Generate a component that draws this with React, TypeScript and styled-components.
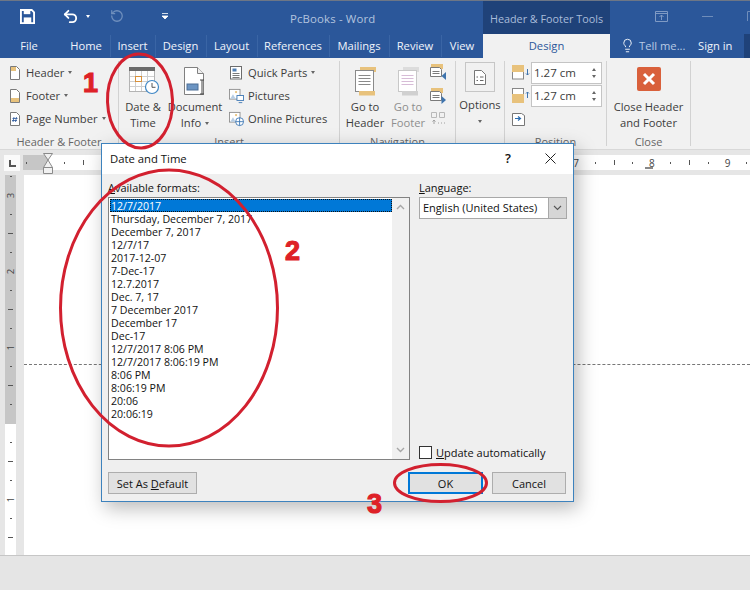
import React from 'react'
import styled, { createGlobalStyle } from 'styled-components'
import { Lightbulb, RotateCcw, Undo2 } from 'lucide-react'

const GlobalStyle = createGlobalStyle`
  html, body { margin: 0; padding: 0; background: #fff; }
  body { font-family: "Open Sans", "Noto Sans", "Liberation Sans", sans-serif; font-size: 11px; color: #222; }
`

const Window = styled.div`
  position: relative;
  width: 750px;
  height: 590px;
  overflow: hidden;
  background: #e5e5e5;
  display: flex;
  flex-direction: column;
`
const TitleBar = styled.div`
  height: 33px;
  margin-top: 1px;
  flex: none;
  background: #2b579a;
  display: flex;
  align-items: center;
  color: #fff;
`
const TopLine = styled.div`
  position: absolute;
  top: 0;
  left: 0;
  right: 0;
  height: 1px;
  background: #6d7686;
`
const QuickBar = styled.div`
  display: flex;
  align-items: center;
  width: 290px;
  flex: none;
  padding-left: 20px;
  box-sizing: border-box;
  height: 100%;
  padding-bottom: 3px;
`
const QuickSlot = styled.div<{ $w: number }>`
  width: ${p => p.$w}px;
  flex: none;
  display: flex;
  align-items: center;
`
const Caret = styled.span<{ $color?: string }>`
  display: inline-block;
  width: 0;
  height: 0;
  border-left: 2.5px solid transparent;
  border-right: 2.5px solid transparent;
  border-top: 3px solid ${p => p.$color || '#666'};
`
const DocTitle = styled.div`
  width: 193px;
  flex: none;
  font-size: 11.4px;
  letter-spacing: 0.15px;
  color: #b3c4de;
  padding-top: 2px;
  box-sizing: border-box;
`
const ContextLabel = styled.div`
  width: 127px;
  flex: none;
  height: 100%;
  background: #1f4279;
  color: #a9bcd9;
  font-size: 10.8px;
  display: flex;
  align-items: center;
  justify-content: center;
  padding-top: 2px;
  box-sizing: border-box;
  white-space: nowrap;
`
const WinButtons = styled.div`
  display: flex;
  align-items: center;
  padding-left: 45px;
  gap: 34px;
  padding-bottom: 3px;
  height: 100%;
  box-sizing: border-box;
`
const Tabs = styled.div`
  height: 24px;
  flex: none;
  background: #2b579a;
  display: flex;
  align-items: center;
`
const Tab = styled.div<{ $w: number; $sep?: boolean; $pr?: number }>`
  width: ${p => p.$w}px;
  flex: none;
  height: 22px;
  box-sizing: border-box;
  padding: 0 ${p => p.$pr || 0}px 2px 0;
  display: flex;
  align-items: center;
  justify-content: center;
  color: #f0f4fa;
  font-size: 11.2px;
  white-space: nowrap;
  box-shadow: ${p => (p.$sep ? '1px 0 0 #3a65a5' : 'none')};
`
const ActiveTab = styled.div`
  width: 127px;
  flex: none;
  align-self: stretch;
  background: #f1f1f1;
  color: #2b579a;
  font-size: 11.2px;
  padding-bottom: 1px;
  box-sizing: border-box;
  display: flex;
  align-items: center;
  justify-content: center;
`
const TellMe = styled.div`
  display: flex;
  align-items: center;
  gap: 4px;
  color: #b9cbe4;
  font-size: 11.2px;
  width: 78px;
  flex: none;
  padding: 0 0 2px 10px;
`
const SignIn = styled.div`
  color: #f0f4fa;
  font-size: 11.2px;
  width: 46px;
  flex: none;
  padding-bottom: 2px;
`
const ShareStub = styled.div`
  flex: 1;
  align-self: stretch;
  margin: 0;
  background: #1f4279;
`
const Ribbon = styled.div`
  height: 92px;
  flex: none;
  background: #f1f1f1;
  border-bottom: 1px solid #d8d8d8;
  box-sizing: border-box;
  display: flex;
`
const Group = styled.div<{ $w: number; $bare?: boolean }>`
  width: ${p => p.$w}px;
  flex: none;
  box-sizing: border-box;
  margin: 3px 0 3px;
  border-right: ${p => (p.$bare ? 'none' : '1px solid #d2d2d2')};
  display: flex;
  flex-direction: column;
`
const GroupBody = styled.div<{ $pad?: number }>`
  flex: 1;
  display: flex;
  padding-left: ${p => p.$pad || 0}px;
  min-height: 0;
`
const GroupLabel = styled.div`
  height: 17px;
  flex: none;
  margin-bottom: -4px;
  text-align: center;
  color: #666;
  font-size: 11px;
  line-height: 17px;
  white-space: nowrap;
`
const SmallList = styled.div<{ $w: number; $pad?: number }>`
  width: ${p => p.$w}px;
  flex: none;
  box-sizing: border-box;
  padding-left: ${p => p.$pad || 0}px;
  display: flex;
  flex-direction: column;
`
const SmallItem = styled.div`
  height: 23px;
  display: flex;
  align-items: center;
  gap: 4px;
  font-size: 11.2px;
  color: #3c3c3c;
  white-space: nowrap;
`
const IconSlot = styled.div<{ $w: number }>`
  width: ${p => p.$w}px;
  flex: none;
  display: flex;
  justify-content: center;
`
const BigButton = styled.div<{ $w: number; $dim?: boolean }>`
  width: ${p => p.$w}px;
  flex: none;
  display: flex;
  flex-direction: column;
  align-items: center;
  padding-top: 6px;
  color: ${p => (p.$dim ? '#8e8e8e' : '#3c3c3c')};
  font-size: 11.2px;
  line-height: 16px;
  white-space: nowrap;
`
const BigIcon = styled.div<{ $shift?: number }>`
  height: 30px;
  margin-bottom: 2px;
  padding-left: ${p => p.$shift || 0}px;
  display: flex;
  align-items: flex-start;
`
const TextLine = styled.div`
  display: flex;
  align-items: center;
  gap: 4px;
  min-height: 16px;
`
const OptionBox = styled.div`
  width: 30px;
  height: 30px;
  box-sizing: border-box;
  margin: -5px 0 5px;
  border: 1px solid #c6c6c6;
  display: flex;
  align-items: center;
  justify-content: center;
`
const NavIcons = styled.div`
  display: flex;
  flex-direction: column;
  gap: 7px;
  padding-top: 3px;
`
const PositionGrid = styled.div`
  display: grid;
  grid-template-columns: 19px 71px;
  grid-auto-rows: 21px;
  row-gap: 2px;
  margin-left: 7px;
  padding-top: 1px;
  align-items: center;
`
const Spinner = styled.div`
  height: 22px;
  background: #fff;
  border: 1px solid #c4c4c4;
  box-sizing: border-box;
  display: flex;
  align-items: center;
  justify-content: space-between;
  padding: 0 5px 0 2px;
  font-size: 11.5px;
  color: #3c3c3c;
`
const SpinArrows = styled.div`
  display: flex;
  flex-direction: column;
  gap: 4px;
`
const UpArrow = styled.span`
  width: 0;
  height: 0;
  border-left: 2.5px solid transparent;
  border-right: 2.5px solid transparent;
  border-bottom: 3px solid #666;
`
const DownArrow = styled(UpArrow)`
  border-bottom: none;
  border-top: 3px solid #666;
`

const RulerBand = styled.div`
  height: 25px;
  flex: none;
  background: #e6e6e6;
  display: flex;
  align-items: flex-start;
  padding-top: 5px;
  box-sizing: border-box;
`
const TabSelector = styled.div`
  width: 16px;
  height: 16px;
  margin-left: 4px;
  background: #fafafa;
  flex: none;
  display: flex;
  align-items: center;
  justify-content: center;
`
const HRuler = styled.div`
  position: relative;
  margin-left: 3px;
  flex: 1;
  height: 15px;
  background: #fff;
  overflow: visible;
  display: flex;
`
const HRulerMargin = styled.div`
  position: absolute;
  top: 0;
  left: 0;
  width: 25px;
  height: 100%;
  background: #c6c6c6;
`
const HTickRow = styled.div`
  position: relative;
  display: flex;
  margin-left: -5.5px;
`
const HTick = styled.div`
  width: 18.95px;
  flex: none;
  height: 15px;
  display: flex;
  align-items: center;
  justify-content: center;
  font-size: 10px;
  color: #444;
`
const Dot = styled.span`
  width: 1px;
  height: 2px;
  background: #555;
`
const TickLine = styled.span`
  width: 1px;
  height: 5px;
  background: #555;
`
const IndentMark = styled.svg`
  position: absolute;
  top: -2px;
  left: 20px;
`
const RightMark = styled.div`
  position: absolute;
  top: 11px;
  left: 622px;
  width: 8px;
  height: 3px;
  border-bottom: 2px solid #888;
  box-sizing: border-box;
`
const Workspace = styled.div`
  flex: 1;
  display: flex;
  min-height: 0;
`
const SideBand = styled.div`
  width: 24px;
  flex: none;
  background: #e6e6e6;
  padding-left: 5px;
  box-sizing: border-box;
  overflow: hidden;
`
const VRuler = styled.div`
  width: 11px;
  margin-top: -8px;
  display: flex;
  flex-direction: column;
`
const VTick = styled.div<{ $mark: number }>`
  height: 19px;
  flex: none;
  background: ${p =>
    p.$mark > 0 ? '#c6c6c6' : p.$mark === 0 ? 'linear-gradient(#c6c6c6 50%, #fff 50%)' : '#fff'};
  display: flex;
  align-items: center;
  justify-content: center;
  font-size: 9.5px;
  color: #444;
`
const VNum = styled.span`
  transform: rotate(-90deg);
`
const VDot = styled.span`
  width: 2px;
  height: 1px;
  background: #555;
`
const VLine = styled.span`
  width: 5px;
  height: 1px;
  background: #555;
`
const Page = styled.div`
  flex: 1;
  background: #fff;
  padding-top: 189px;
  box-sizing: border-box;
`
const HeaderRule = styled.div`
  border-top: 1px dashed #777;
`
const StatusBand = styled.div`
  height: 35px;
  flex: none;
  background: #e5e5e5;
  border-top: 1px solid #c6c6c6;
  box-sizing: border-box;
`

const Dialog = styled.div`
  position: absolute;
  left: 101px;
  top: 143px;
  width: 473px;
  height: 359px;
  box-sizing: border-box;
  background: #efefef;
  border: 1px solid #3d82bd;
  box-shadow: 4px 6px 18px rgba(0, 0, 0, 0.28);
  display: flex;
  flex-direction: column;
`
const DialogTitle = styled.div`
  height: 30px;
  flex: none;
  box-sizing: border-box;
  background: #fff;
  display: flex;
  align-items: center;
  padding: 0 17px 2px 8px;
  font-size: 11.3px;
  color: #111;
`
const DialogHeading = styled.div`
  flex: 1;
`
const HelpMark = styled.div`
  font-size: 13px;
  font-weight: 600;
  margin-right: 34px;
`
const DialogBody = styled.div`
  flex: 1;
  display: grid;
  grid-template-columns: 302px 148px;
  column-gap: 9px;
  padding: 6px 6px 0;
  min-height: 0;
`
const Column = styled.div`
  display: flex;
  flex-direction: column;
`
const FieldLabel = styled.div`
  height: 17px;
  font-size: 11px;
  line-height: 15px;
  color: #111;
`
const ListBox = styled.div`
  flex: 1;
  display: flex;
  background: #fff;
  border: 1px solid #828282;
  min-height: 0;
`
const Options = styled.div`
  flex: 1;
  padding: 1px 0 0 1px;
  font-size: 10.6px;
  color: #111;
`
const Option = styled.div<{ $selected?: boolean }>`
  height: 13px;
  line-height: 15px;
  padding-left: 1px;
  white-space: nowrap;
  background: ${p => (p.$selected ? '#0078d7' : 'transparent')};
  color: ${p => (p.$selected ? '#fff' : '#111')};
  outline: ${p => (p.$selected ? '1px dotted #111' : 'none')};
  outline-offset: -1px;
`
const ScrollTrack = styled.div`
  width: 17px;
  flex: none;
  background: #f0f0f0;
  display: flex;
  flex-direction: column;
  justify-content: space-between;
  align-items: center;
  padding: 6px 0;
  box-sizing: border-box;
`
const SelectBox = styled.div`
  height: 22px;
  display: flex;
  background: #fff;
  border: 1px solid #a8a8a8;
  box-sizing: border-box;
  font-size: 11px;
  color: #111;
`
const SelectValue = styled.div`
  flex: 1;
  display: flex;
  align-items: center;
  padding: 0 0 1px 3px;
  white-space: nowrap;
`
const SelectButton = styled.div`
  width: 17px;
  flex: none;
  background: #d6d6d6;
  border-left: 1px solid #a8a8a8;
  display: flex;
  align-items: center;
  justify-content: center;
`
const Spacer = styled.div`
  flex: 1;
`
const CheckRow = styled.div`
  display: flex;
  align-items: center;
  gap: 4px;
  font-size: 11px;
  color: #111;
  height: 14px;
  margin-bottom: 1px;
  white-space: nowrap;
`
const CheckBox = styled.div`
  width: 13px;
  height: 13px;
  box-sizing: border-box;
  border: 1px solid #333;
  background: #fff;
`
const DialogFooter = styled.div`
  height: 41px;
  flex: none;
  display: flex;
  align-items: flex-start;
  gap: 9px;
  padding: 12px 7px 0 6px;
  box-sizing: border-box;
`
const DialogButton = styled.div<{ $w: number; $primary?: boolean }>`
  width: ${p => p.$w}px;
  height: 22px;
  flex: none;
  box-sizing: border-box;
  background: #e1e1e1;
  border: ${p => (p.$primary ? '2px solid #0078d7' : '1px solid #adadad')};
  display: flex;
  align-items: center;
  justify-content: center;
  font-size: 11px;
  color: #111;
  white-space: nowrap;
`
const Under = styled.span`
  text-decoration: underline;
`
const Annotations = styled.svg`
  position: absolute;
  left: 0;
  top: 0;
  pointer-events: none;
`
const Step = styled.div<{ $x: number; $y: number }>`
  position: absolute;
  left: ${p => p.$x}px;
  top: ${p => p.$y}px;
  font-family: "Liberation Sans", sans-serif;
  font-weight: 700;
  font-size: 27px;
  line-height: 27px;
  color: #de2127;
  -webkit-text-stroke: 1.1px #de2127;
`

const tan = '#e8c27c'
const line = '#7a7a7a'

function PageIcon({ tanAt }: { tanAt: 'top' | 'bottom' }) {
  return (
    <svg width="12" height="14" viewBox="0 0 12 14">
      <path d="M1.5.5h6l3 3v10h-9z" fill="#fff" stroke={line} />
      <rect x="2" y={tanAt === 'top' ? 1 : 9} width={tanAt === 'top' ? 5 : 8} height="4" fill={tan} />
    </svg>
  )
}
function PageNumberIcon() {
  return (
    <svg width="12" height="14" viewBox="0 0 12 14">
      <path d="M1.5.5h6l3 3v10h-9z" fill="#fff" stroke={line} />
      <path d="M5 5l-1 5M7.5 5l-1 5M3.5 6.5h5M3 8.5h5" stroke="#2b579a" strokeWidth=".8" fill="none" />
    </svg>
  )
}
function CalendarIcon() {
  return (
    <svg width="31" height="28" viewBox="0 0 31 28">
      <rect x=".5" y="3.5" width="25" height="21" fill="#fff" stroke="#b4b4b4" />
      <rect x="0" y="0" width="26" height="4" fill="#6b6b6b" />
      <path d="M6.5 4v20M12.5 4v20M18.5 4v20M1 9.5h24M1 14.5h24M1 19.5h24" stroke="#cfcfcf" fill="none" />
      <rect x="6.5" y="9.5" width="6" height="5" fill="#fff" stroke="#d9913a" />
      <circle cx="23" cy="20" r="6.5" fill="#fff" stroke="#3f87c5" strokeWidth="1.2" />
      <path d="M23 16v4.3h3.5" stroke="#555" fill="none" />
    </svg>
  )
}
function DocInfoIcon() {
  return (
    <svg width="22" height="29" viewBox="0 0 22 29">
      <path d="M.5.5h13l6 6v21H.5z" fill="#fff" stroke="#808080" />
      <path d="M13.5.5v6h6" fill="#eee" stroke="#808080" />
      <rect x="3" y="17" width="11" height="6" fill="#6c95c3" stroke="#4c6f96" />
      <path d="M16 13h4M18 13v14M16 27h4" stroke="#444" fill="none" />
    </svg>
  )
}
function QuickPartsIcon() {
  return (
    <svg width="13" height="14" viewBox="0 0 13 14">
      <rect x=".5" y=".5" width="11" height="12.5" fill="#fff" stroke="#6c6c6c" />
      <rect x="2.5" y="2.5" width="4" height="3" fill="#4f7fb4" />
      <path d="M2.5 7.5h7M2.5 9.5h7M2.5 11.5h7" stroke="#7a7a7a" fill="none" />
    </svg>
  )
}
function PictureIcon({ globe }: { globe?: boolean }) {
  return (
    <svg width="17" height="16" viewBox="0 0 17 16">
      <rect x=".5" y=".5" width="12" height="11" fill="#fff" stroke="#8c8c8c" />
      <circle cx="8" cy="3.5" r="1.3" fill={tan} />
      <path d="M1.5 11l3-5 3 5z" fill="#b7cde3" />
      {globe ? (
        <g fill="#fff" stroke="#3b76b4">
          <circle cx="12" cy="11" r="4.5" />
          <path d="M7.5 11h9M12 6.5v9" fill="none" />
        </g>
      ) : (
        <g>
          <rect x="9" y="7.5" width="7.5" height="5.5" fill="#fff" stroke="#3b76b4" />
          <path d="M11 15.5h4" stroke="#3b76b4" />
        </g>
      )}
    </svg>
  )
}
function GoToIcon({ dim }: { dim?: boolean }) {
  return (
    <svg width="23" height="29" viewBox="0 0 23 29">
      <rect x="6" y="0" width="16" height="5" fill={dim ? '#dcdcdc' : tan} />
      <rect x="1.5" y="3.5" width="18" height="21" fill="#fff" stroke={dim ? '#c8c8c8' : '#8a8a8a'} />
      <path d="M4.5 8.5h12M4.5 11.5h12M4.5 14.5h12M4.5 17.5h12" stroke={dim ? '#d7bcd7' : '#8a8a8a'} fill="none" />
      <rect x="5" y="24" width="16" height="4.5" fill={dim ? '#d0d0d0' : tan} />
    </svg>
  )
}
function NavSmallIcon({ forward }: { forward?: boolean }) {
  return (
    <svg width="16" height="17" viewBox="0 0 16 17">
      <rect x="1" y="0" width="12" height="5" fill={tan} />
      <path d="M.5 3.5h9l2 2v7h-11z" fill="#fff" stroke="#7a7a7a" />
      <path d="M2.5 7.5h7M2.5 9.5h7" stroke="#7a7a7a" fill="none" />
      <path d={forward ? 'M11.5 8l4.5 4-4.5 4z' : 'M16 8v8l-4.5-4z'} fill="#3f74ad" />
    </svg>
  )
}
function LinkIcon() {
  return (
    <svg width="16" height="13" viewBox="0 0 16 13">
      <path d="M1.5.5h5v5h-5zM9.5.5h5v5h-5z" fill="none" stroke="#b8b8b8" />
      <path d="M4 12V8M2.5 9.5L4 8l1.5 1.5M8 11h1M11 11h1M14 11h1" stroke="#a0a0a0" fill="none" />
    </svg>
  )
}
function OptionsIcon() {
  return (
    <svg width="12" height="15" viewBox="0 0 12 15">
      <path d="M.5.5h7l4 4v10H.5z" fill="#fff" stroke="#777" />
      <path d="M2.5 7h1.5M2.5 10.5h1.5M6 7h3.5M6 10.5h3.5" stroke="#666" strokeWidth="1.2" fill="none" />
    </svg>
  )
}
function MarginIcon({ tanAt }: { tanAt: 'top' | 'bottom' }) {
  return (
    <svg width="18" height="15" viewBox="0 0 18 15">
      <rect x=".5" y=".5" width="11" height="13.5" fill="#fff" stroke="#888" />
      <rect x="0" y={tanAt === 'top' ? 0 : 6} width="12" height={tanAt === 'top' ? 7 : 9} fill={tan} />
      <path d={tanAt === 'top' ? 'M15.5 4v6M14 8.5l1.5 1.5L17 8.5' : 'M15.5 4v6M14 5.5L15.5 4 17 5.5'} stroke="#3f74ad" fill="none" />
    </svg>
  )
}
function InsertTabIcon() {
  return (
    <svg width="14" height="15" viewBox="0 0 14 15">
      <path d="M.5 2.5h9l3 2v10H.5z" fill="#fff" stroke="#777" />
      <path d="M3 7.5h5M6 5.5l2.5 2L6 9.5" stroke="#2b6cb0" strokeWidth="1.2" fill="none" />
    </svg>
  )
}
function CloseIcon() {
  return (
    <svg width="24" height="24" viewBox="0 0 24 24">
      <rect width="24" height="24" rx="2" fill="#d9603b" />
      <path d="M7 7l10 10M17 7L7 17" stroke="#fff" strokeWidth="3" />
    </svg>
  )
}

const formats = [
  '12/7/2017',
  'Thursday, December 7, 2017',
  'December 7, 2017',
  '12/7/17',
  '2017-12-07',
  '7-Dec-17',
  '12.7.2017',
  'Dec. 7, 17',
  '7 December 2017',
  'December 17',
  'Dec-17',
  '12/7/2017 8:06 PM',
  '12/7/2017 8:06:19 PM',
  '8:06 PM',
  '8:06:19 PM',
  '20:06',
  '20:06:19',
]

// -1 is the first mark left of the margin, every 4th mark carries a number
const hTicks = Array.from({ length: 39 }, (_, i) => i - 1)
const vTicks = Array.from({ length: 21 }, (_, i) => 13 - i)

function renderHTick(k: number) {
  if (k === 0) return null
  if (k % 4 === 0) return k >= 28 ? k / 4 : null // the lower numbers sit behind the dialog
  if (((k % 4) + 4) % 4 === 2) return <TickLine />
  return <Dot />
}
function renderVTick(k: number) {
  // k counts marks away from the top margin edge
  const a = Math.abs(k)
  if (a === 0) return null
  if (a % 4 === 0) return <VNum>{a / 4}</VNum>
  if (a % 4 === 2) return <VLine />
  return <VDot />
}

export default function App() {
  return (
    <Window>
      <GlobalStyle />
      <TopLine />
      <TitleBar>
        <QuickBar>
          <QuickSlot $w={42}>
            <svg width="15" height="15" viewBox="0 0 16 16">
              <path d="M1 1h11.5L15 3.5V15H1z" fill="none" stroke="#fff" strokeWidth="2" />
              <rect x="4" y="1" width="7" height="4.5" fill="#fff" />
              <rect x="4" y="9" width="8" height="6" fill="#fff" />
            </svg>
          </QuickSlot>
          <QuickSlot $w={24}>
            <Undo2 size={17} color="#fff" strokeWidth={2.6} />
          </QuickSlot>
          <QuickSlot $w={24}>
            <Caret $color="#fff" />
          </QuickSlot>
          <QuickSlot $w={52}>
            <RotateCcw size={14} color="#6f8fbd" strokeWidth={2.2} />
          </QuickSlot>
          <QuickSlot $w={10}>
            <svg width="6" height="6" viewBox="0 0 6 6">
              <path d="M0 .5h6M0 3h6l-3 3z" stroke="#fff" fill="#fff" strokeWidth=".8" />
            </svg>
          </QuickSlot>
        </QuickBar>
        <DocTitle>PcBooks - Word</DocTitle>
        <ContextLabel>Header &amp; Footer Tools</ContextLabel>
        <WinButtons>
          <svg width="13" height="11" viewBox="0 0 13 11">
            <path d="M.5.5h12v10H.5zM.5 2.5h12M6.5 9V4M4.5 6l2-2 2 2" stroke="#7f9ac4" fill="none" />
          </svg>
          <svg width="11" height="1" viewBox="0 0 11 1">
            <path d="M0 .5h11" stroke="#6f8dba" />
          </svg>
          <svg width="8" height="10" viewBox="0 0 8 10">
            <path d="M.5.5h10v10H.5z" stroke="#6f8dba" fill="none" />
          </svg>
        </WinButtons>
      </TitleBar>

      <Tabs>
        <Tab $w={62} $pr={4}>File</Tab>
        <Tab $w={48} $sep>Home</Tab>
        <Tab $w={45} $sep>Insert</Tab>
        <Tab $w={51} $sep>Design</Tab>
        <Tab $w={51} $sep>Layout</Tab>
        <Tab $w={72} $sep>References</Tab>
        <Tab $w={60} $sep>Mailings</Tab>
        <Tab $w={52} $sep>Review</Tab>
        <Tab $w={42}>View</Tab>
        <ActiveTab>Design</ActiveTab>
        <TellMe>
          <Lightbulb size={15} color="#e8eef6" strokeWidth={1.6} />
          Tell me...
        </TellMe>
        <SignIn>Sign in</SignIn>
        <ShareStub />
      </Tabs>

      <Ribbon>
        <Group $w={119}>
          <GroupBody $pad={8}>
            <SmallList $w={110}>
              <SmallItem><IconSlot $w={14}><PageIcon tanAt="top" /></IconSlot>Header <Caret /></SmallItem>
              <SmallItem><IconSlot $w={14}><PageIcon tanAt="bottom" /></IconSlot>Footer <Caret /></SmallItem>
              <SmallItem><IconSlot $w={14}><PageNumberIcon /></IconSlot>Page Number <Caret /></SmallItem>
            </SmallList>
          </GroupBody>
          <GroupLabel>Header &amp; Footer</GroupLabel>
        </Group>
        <Group $w={221}>
          <GroupBody>
            <BigButton $w={48}>
              <BigIcon $shift={3}><CalendarIcon /></BigIcon>
              <div>Date &amp;</div>
              <div>Time</div>
            </BigButton>
            <BigButton $w={56}>
              <BigIcon><DocInfoIcon /></BigIcon>
              <div>Document</div>
              <TextLine>Info <Caret /></TextLine>
            </BigButton>
            <SmallList $w={110} $pad={6}>
              <SmallItem><IconSlot $w={15}><QuickPartsIcon /></IconSlot>Quick Parts <Caret /></SmallItem>
              <SmallItem><IconSlot $w={15}><PictureIcon /></IconSlot>Pictures</SmallItem>
              <SmallItem><IconSlot $w={15}><PictureIcon globe /></IconSlot>Online Pictures</SmallItem>
            </SmallList>
          </GroupBody>
          <GroupLabel>Insert</GroupLabel>
        </Group>
        <Group $w={116}>
          <GroupBody $pad={4}>
            <BigButton $w={42}>
              <BigIcon><GoToIcon /></BigIcon>
              <div>Go to</div>
              <div>Header</div>
            </BigButton>
            <BigButton $w={44} $dim>
              <BigIcon><GoToIcon dim /></BigIcon>
              <div>Go to</div>
              <div>Footer</div>
            </BigButton>
            <NavIcons>
              <NavSmallIcon />
              <NavSmallIcon forward />
              <LinkIcon />
            </NavIcons>
          </GroupBody>
          <GroupLabel>Navigation</GroupLabel>
        </Group>
        <Group $w={49}>
          <GroupBody>
            <BigButton $w={48}>
              <OptionBox><OptionsIcon /></OptionBox>
              <div>Options</div>
              <TextLine><Caret /></TextLine>
            </BigButton>
          </GroupBody>
        </Group>
        <Group $w={102}>
          <GroupBody>
            <PositionGrid>
              <MarginIcon tanAt="top" />
              <Spinner>1.27 cm<SpinArrows><UpArrow /><DownArrow /></SpinArrows></Spinner>
              <MarginIcon tanAt="bottom" />
              <Spinner>1.27 cm<SpinArrows><UpArrow /><DownArrow /></SpinArrows></Spinner>
              <InsertTabIcon />
            </PositionGrid>
          </GroupBody>
          <GroupLabel>Position</GroupLabel>
        </Group>
        <Group $w={84}>
          <GroupBody>
            <BigButton $w={83}>
              <BigIcon><CloseIcon /></BigIcon>
              <div>Close Header</div>
              <div>and Footer</div>
            </BigButton>
          </GroupBody>
          <GroupLabel>Close</GroupLabel>
        </Group>
      </Ribbon>

      <RulerBand>
        <TabSelector>
          <svg width="7" height="7" viewBox="0 0 7 7">
            <path d="M1 0v6h6" stroke="#555" strokeWidth="2" fill="none" />
          </svg>
        </TabSelector>
        <HRuler>
          <HRulerMargin />
          <HTickRow>
            {hTicks.map(k => (
              <HTick key={k}>{renderHTick(k)}</HTick>
            ))}
          </HTickRow>
          <IndentMark width="10" height="21" viewBox="0 0 10 21">
            <path d="M.5.5h9L5 7zM5 7l4.5 7.5H.5zM.5 14.5h9v6h-9z" fill="#f1f1f1" stroke="#8a8a8a" />
          </IndentMark>
          <RightMark />
        </HRuler>
      </RulerBand>

      <Workspace>
        <SideBand>
          <VRuler>
            {vTicks.map(k => (
              <VTick key={k} $mark={k}>{renderVTick(k)}</VTick>
            ))}
          </VRuler>
        </SideBand>
        <Page>
          <HeaderRule />
        </Page>
      </Workspace>
      <StatusBand />

      <Dialog>
        <DialogTitle>
          <DialogHeading>Date and Time</DialogHeading>
          <HelpMark>?</HelpMark>
          <svg width="11" height="11" viewBox="0 0 11 11">
            <path d="M.5.5l10 10M10.5.5l-10 10" stroke="#222" fill="none" />
          </svg>
        </DialogTitle>
        <DialogBody>
          <Column>
            <FieldLabel><Under>A</Under>vailable formats:</FieldLabel>
            <ListBox>
              <Options>
                {formats.map((f, i) => (
                  <Option key={f} $selected={i === 0}>{f}</Option>
                ))}
              </Options>
              <ScrollTrack>
                <svg width="9" height="6" viewBox="0 0 9 6"><path d="M1 5l3.5-3.5L8 5" stroke="#a6a6a6" strokeWidth="1.4" fill="none" /></svg>
                <svg width="9" height="6" viewBox="0 0 9 6"><path d="M1 1l3.5 3.5L8 1" stroke="#a6a6a6" strokeWidth="1.4" fill="none" /></svg>
              </ScrollTrack>
            </ListBox>
          </Column>
          <Column>
            <FieldLabel><Under>L</Under>anguage:</FieldLabel>
            <SelectBox>
              <SelectValue>English (United States)</SelectValue>
              <SelectButton>
                <svg width="9" height="6" viewBox="0 0 9 6"><path d="M1 1l3.5 3.5L8 1" stroke="#555" strokeWidth="1.1" fill="none" /></svg>
              </SelectButton>
            </SelectBox>
            <Spacer />
            <CheckRow><CheckBox /><span><Under>U</Under>pdate automatically</span></CheckRow>
          </Column>
        </DialogBody>
        <DialogFooter>
          <DialogButton $w={89}>Set As&nbsp;<Under>D</Under>efault</DialogButton>
          <Spacer />
          <DialogButton $w={75} $primary>OK</DialogButton>
          <DialogButton $w={74}>Cancel</DialogButton>
        </DialogFooter>
      </Dialog>

      <Annotations width="750" height="590" viewBox="0 0 750 590">
        <g fill="none" stroke="#d2202f" strokeWidth="3">
          <ellipse cx="140" cy="101" rx="32.5" ry="47" transform="rotate(-2 140 101)" />
          <ellipse cx="169" cy="308" rx="108.5" ry="138" />
          <ellipse cx="440.5" cy="483" rx="46" ry="18.5" />
        </g>
      </Annotations>
      <Step $x={83} $y={70}>1</Step>
      <Step $x={285} $y={238}>2</Step>
      <Step $x={367} $y={491}>3</Step>
    </Window>
  )
}
